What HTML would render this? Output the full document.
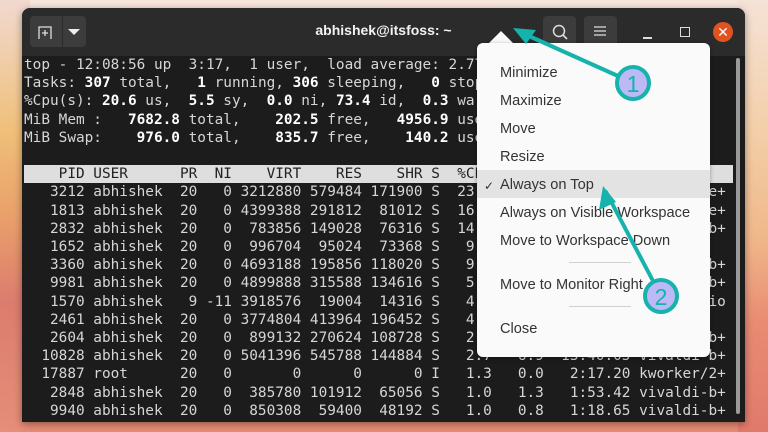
<!DOCTYPE html>
<html><head><meta charset="utf-8"><style>
*{margin:0;padding:0;box-sizing:border-box}
body{width:768px;height:432px;overflow:hidden;position:relative;
background:linear-gradient(180deg,#f6e6de 0%,#f3c9a8 35%,#eca384 65%,#e88a74 100%);font-family:"Liberation Sans",sans-serif}
.bgl{position:absolute;left:0;top:0;width:30px;height:432px;background:linear-gradient(180deg,#f1d9d0 0%,#f0c07a 30%,#e9a06a 50%,#dc7c6e 70%,#e58e78 100%)}
.bgr{position:absolute;right:0;top:0;width:30px;height:432px;background:linear-gradient(180deg,#f5e2d6 0%,#f3cfa9 30%,#f0b88a 55%,#e98a72 75%,#e07a6c 100%)}
.win{position:absolute;left:22px;top:8px;width:723px;height:414px;background:#1c1c1c;border-radius:8px 8px 0 0;overflow:hidden;box-shadow:0 2px 8px rgba(0,0,0,.4)}
.tb{position:absolute;left:0;top:0;width:723px;height:48px;background:#2b2b2b}
.btn{position:absolute;background:#3c3c3c;border-radius:4px}
.title{position:absolute;left:0;width:723px;top:14px;text-align:center;color:#f2f2f2;font-weight:bold;font-size:14px}
pre{position:absolute;left:2px;font-family:"DejaVu Sans Mono","Liberation Mono",monospace;font-size:14.4px;line-height:18.2px;color:#d6d6d6}
b{color:#fff}
.hdr{position:absolute;left:2px;top:157px;width:709px;height:18px;background:#dedede}
.sb{position:absolute;left:714px;top:50px;width:4px;height:356px;background:#9a9a9a;border-radius:2px}
.menu{position:absolute;left:477px;top:43px;width:233px;height:314px;background:#fafafa;border-radius:6px;box-shadow:0 1px 4px rgba(0,0,0,.35)}
.caret{position:absolute;left:489px;top:31px;width:0;height:0;border-left:12px solid transparent;border-right:12px solid transparent;border-bottom:12px solid #fafafa}
.mi{position:absolute;left:23px;font-size:14.6px;color:#333}
.hl{position:absolute;left:0;top:127px;width:233px;height:28px;background:#e3e3e3}
.sep{position:absolute;left:92px;width:62px;height:1px;background:#d0d0d0}
</style></head><body>
<div class="bgl"></div><div class="bgr"></div>
<div class="win">
<div class="tb">
<div class="btn" style="left:8px;top:8px;width:56px;height:31px"></div>
<div style="position:absolute;left:40px;top:8px;width:1px;height:31px;background:#2b2b2b"></div>
<svg style="position:absolute;left:15px;top:16px" width="18" height="16"><path d="M2 15V3h12v12M8 6v6M5 9h6" stroke="#ddd" stroke-width="1.3" fill="none"/></svg>
<svg style="position:absolute;left:45px;top:20px" width="14" height="8"><path d="M1 1h12L7 7z" fill="#eee"/></svg>
<div class="title">abhishek@itsfoss: ~</div>
<div class="btn" style="left:521px;top:8px;width:33px;height:31px"></div>
<svg style="position:absolute;left:529px;top:15px" width="18" height="18"><circle cx="8" cy="8" r="5.5" stroke="#ddd" stroke-width="1.5" fill="none"/><path d="M12 12l4 4" stroke="#ddd" stroke-width="1.6"/></svg>
<div class="btn" style="left:562px;top:8px;width:33px;height:31px"></div>
<svg style="position:absolute;left:571px;top:17px" width="14" height="12"><path d="M1 2h12M1 6h12M1 10h12" stroke="#ddd" stroke-width="1.3"/></svg>
<div style="position:absolute;left:621px;top:29px;width:9px;height:2px;background:#ddd"></div>
<div style="position:absolute;left:658px;top:19px;width:10px;height:10px;border:1.6px solid #ddd"></div>
<div style="position:absolute;left:691px;top:14px;width:20px;height:20px;border-radius:50%;background:#e0531f;color:#fff;text-align:center;font-size:14px;line-height:20px">✕</div>
</div>
<div class="hdr"></div>
<pre style="top:48px">top - 12:08:56 up  3:17,  1 user,  load average: 2.77, 2.41, 2.18
Tasks: <b>307</b> total,   <b>1</b> running, <b>306</b> sleeping,   <b>0</b> stopped,   <b>0</b> zombie
%Cpu(s): <b>20.6</b> us,  <b>5.5</b> sy,  <b>0.0</b> ni, <b>73.4</b> id,  <b>0.3</b> wa,  <b>0.0</b> hi,  <b>0.2</b> si
MiB Mem :   <b>7682.8</b> total,    <b>202.5</b> free,   <b>4956.9</b> used,   <b>2523.4</b> buff/cache
MiB Swap:    <b>976.0</b> total,    <b>835.7</b> free,    <b>140.2</b> used.   <b>1867.5</b> avail Mem

<span style="color:#222">    PID USER      PR  NI    VIRT    RES    SHR S  %CPU  %MEM     TIME+ COMMAND</span>
   3212 abhishek  20   0 3212880 579484 171900 S  23.2   7.4  25:18.42 gnome-she+
   1813 abhishek  20   0 4399388 291812  81012 S  16.6   3.7  14:02.17 gnome-she+
   2832 abhishek  20   0  783856 149028  76316 S  14.6   1.9   8:41.55 vivaldi-b+
   1652 abhishek  20   0  996704  95024  73368 S   9.9   1.2   6:12.03 Xorg
   3360 abhishek  20   0 4693188 195856 118020 S   9.3   2.5   5:44.80 vivaldi-b+
   9981 abhishek  20   0 4899888 315588 134616 S   5.6   4.0   3:20.11 vivaldi-b+
   1570 abhishek   9 -11 3918576  19004  14316 S   4.3   0.2   2:58.40 pulseaudio
   2461 abhishek  20   0 3774804 413964 196452 S   4.0   5.3   4:12.66 firefox
   2604 abhishek  20   0  899132 270624 108728 S   2.7   3.4   3:05.91 vivaldi-b+
  10828 abhishek  20   0 5041396 545788 144884 S   2.7   6.9  13:40.05 vivaldi-b+
  17887 root      20   0       0      0      0 I   1.3   0.0   2:17.20 kworker/2+
   2848 abhishek  20   0  385780 101912  65056 S   1.0   1.3   1:53.42 vivaldi-b+
   9940 abhishek  20   0  850308  59400  48192 S   1.0   0.8   1:18.65 vivaldi-b+</pre>
<div class="sb"></div>
</div>
<div class="caret"></div>
<div class="menu">
<div class="hl"></div>
<div class="mi" style="top:22px">Minimize</div>
<div class="mi" style="top:50px">Maximize</div>
<div class="mi" style="top:78px">Move</div>
<div class="mi" style="top:106px">Resize</div>
<div class="mi" style="left:7px;font-size:12px;top:136px">✓</div>
<div class="mi" style="top:134px">Always on Top</div>
<div class="mi" style="top:162px">Always on Visible Workspace</div>
<div class="mi" style="top:190px">Move to Workspace Down</div>
<div class="sep" style="top:219px"></div>
<div class="mi" style="top:234px">Move to Monitor Right</div>
<div class="sep" style="top:263px"></div>
<div class="mi" style="top:278px">Close</div>
</div>
<svg style="position:absolute;left:0;top:0" width="768" height="432">
<g stroke="#15b3ab" stroke-width="4" fill="none" stroke-linecap="round">
<path d="M618 76L520 32"/>
<path d="M652 279L606 192"/>
</g>
<path d="M513 28L536 30L526 44Z" fill="#15b3ab"/>
<path d="M603 186L599 210L616 202Z" fill="#15b3ab"/>
<circle cx="633" cy="83" r="16" fill="#bdb8f6" stroke="#15b3ab" stroke-width="4"/>
<circle cx="661" cy="296" r="16" fill="#bdb8f6" stroke="#15b3ab" stroke-width="4"/>
<text x="633" y="92" font-family="Liberation Sans" font-size="23" fill="#15b3ab" text-anchor="middle">1</text>
<text x="661" y="305" font-family="Liberation Sans" font-size="23" fill="#15b3ab" text-anchor="middle">2</text>
</svg>
</body></html>
